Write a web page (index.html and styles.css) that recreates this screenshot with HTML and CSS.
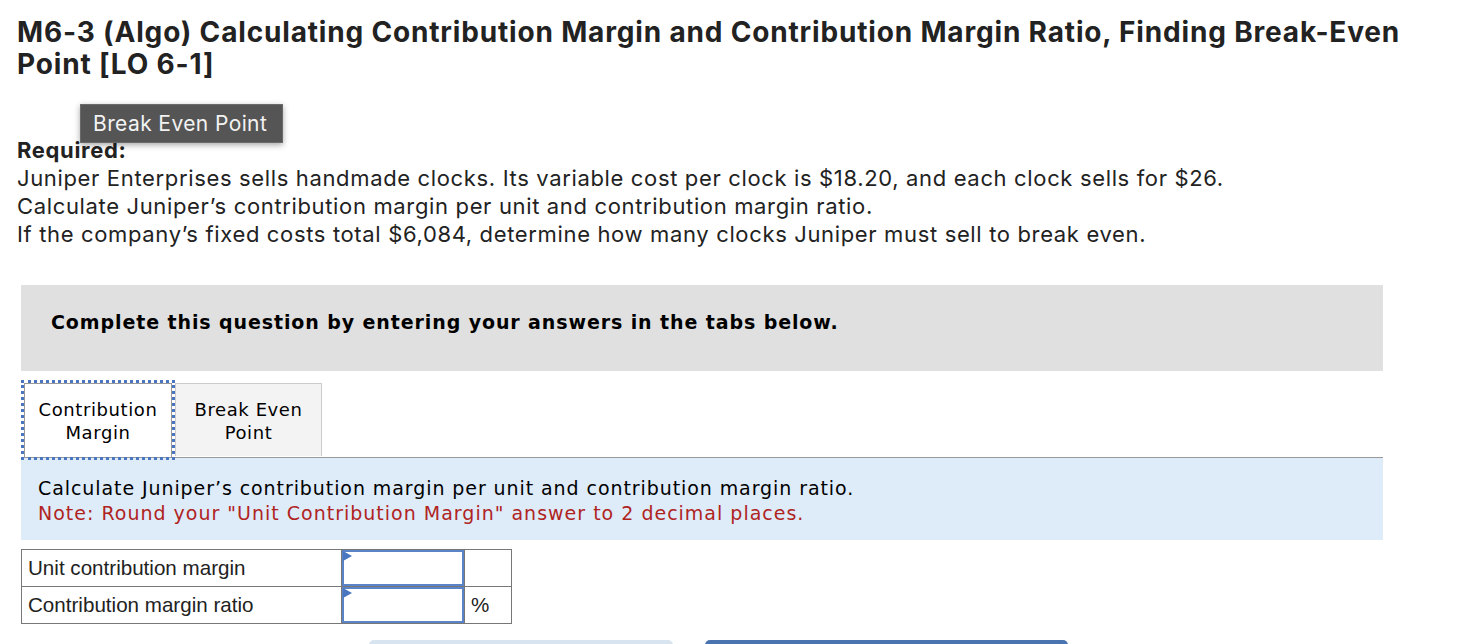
FILE: index.html
```html
<!DOCTYPE html>
<html>
<head>
<meta charset="utf-8">
<link rel="stylesheet" href="styles.css">
</head>
<body>
<div class="page">
  <h1 class="title">M6-3 (Algo) Calculating Contribution Margin and Contribution Margin Ratio, Finding Break-Even<br>Point [LO 6-1]</h1>
  <div class="req">
    <div class="tooltip">Break Even Point</div>
    <p class="req-label">Required:</p>
    <p class="req-text">Juniper Enterprises sells handmade clocks. Its variable cost per clock is $18.20, and each clock sells for $26.<br>Calculate Juniper’s contribution margin per unit and contribution margin ratio.<br>If the company’s fixed costs total $6,084, determine how many clocks Juniper must sell to break even.</p>
  </div>
  <div class="work">
    <div class="instr">Complete this question by entering your answers in the tabs below.</div>
    <div class="tabs">
      <div class="tab active">Contribution<br>Margin</div>
      <div class="tab second">Break Even<br>Point</div>
    </div>
    <div class="panel">
      <p>Calculate Juniper’s contribution margin per unit and contribution margin ratio.</p>
      <p class="note">Note: Round your "Unit Contribution Margin" answer to 2 decimal places.</p>
    </div>
    <table class="grid">
      <tr>
        <td class="lbl">Unit contribution margin</td>
        <td class="inp"><div class="field"></div></td>
        <td class="unit"></td>
      </tr>
      <tr>
        <td class="lbl">Contribution margin ratio</td>
        <td class="inp"><div class="field"></div></td>
        <td class="unit">%</td>
      </tr>
    </table>
    <div class="buttons">
      <div class="btn light"></div>
      <div class="btn dark"></div>
    </div>
  </div>
</div>
</body>
</html>
```
FILE: styles.css
```css
html, body {
  margin: 0;
  padding: 0;
  background: #fff;
  overflow: hidden;
}
.page {
  padding: 16px 0 0 17px;
  color: #222;
}
.title {
  font-family: Inter, "Liberation Sans", sans-serif;
  font-weight: 700;
  font-size: 28px;
  letter-spacing: 0.83px;
  line-height: 32px;
  margin: 0;
  color: #222;
}
.req {
  position: relative;
  margin-top: 56px;
  font-family: Inter, "Liberation Sans", sans-serif;
  font-size: 22px;
  letter-spacing: 0.65px;
  line-height: 28px;
  color: #222;
}
.req p { margin: 0; }
.req-label { font-weight: 700; }
.tooltip {
  position: absolute;
  left: 63px;
  top: -32px;
  width: 203px;
  height: 39px;
  box-sizing: border-box;
  background: #555;
  border: 1px solid #6a6a6a;
  color: #f2f2f2;
  font-size: 21px;
  letter-spacing: 0.4px;
  line-height: 37px;
  padding-left: 12px;
  box-shadow: 0 2px 6px rgba(0,0,0,0.35);
}
.work {
  margin-left: 4px;
  width: 1362px;
  margin-top: 37px;
}
.instr {
  background: #e0e0e0;
  height: 86px;
  box-sizing: border-box;
  padding: 26px 0 0 30px;
  font-family: Verdana, "DejaVu Sans", sans-serif;
  font-weight: 700;
  font-size: 19px;
  letter-spacing: 0.9px;
  color: #000;
}
.tabs {
  display: flex;
  margin-top: 12px;
  border-bottom: 1px solid #999;
  padding-left: 3px;
}
.tab {
  width: 148px;
  height: 73px;
  box-sizing: border-box;
  border: 1px solid #ccc;
  border-bottom: none;
  background: #f3f3f3;
  font-family: Verdana, "DejaVu Sans", sans-serif;
  font-size: 18px;
  letter-spacing: 0.6px;
  line-height: 23px;
  text-align: center;
  padding-top: 14px;
  color: #000;
  margin-right: 3px;
}
.tab.second { width: 147px; }
.tab.active {
  background: #fff;
  border-color: #999;
  outline: 3px dotted #4a76c0;
  outline-offset: 0;
  height: 74px;
}
.panel {
  background: #deebf8;
  height: 82px;
  box-sizing: border-box;
  padding: 18px 0 0 17px;
  font-family: Verdana, "DejaVu Sans", sans-serif;
  font-size: 19px;
  letter-spacing: 0.92px;
  line-height: 25px;
  color: #000;
}
.panel p { margin: 0; }
.panel .note { color: #b0241f; letter-spacing: 1px; }
.grid {
  margin-top: 9px;
  border-collapse: collapse;
  font-family: Arial, "Liberation Sans", sans-serif;
  font-size: 20.6px;
  color: #222;
}
.grid td {
  border: 1px solid #777;
  height: 36px;
  padding: 0;
}
.grid .lbl {
  width: 313px;
  padding-left: 6px;
}
.grid .inp {
  width: 122px;
  padding: 0;
  position: relative;
}
.field {
  height: 32px;
  border: 2px solid #5b83c7;
  position: relative;
}
.field::before {
  content: "";
  position: absolute;
  left: -1px;
  top: -1px;
  border-left: 9px solid #4a76c0;
  border-top: 5px solid transparent;
  border-bottom: 5px solid transparent;
}
.grid .unit {
  width: 40px;
  padding-left: 6px;
}
.buttons {
  display: flex;
  margin-top: 16px;
  padding-left: 348px;
  gap: 32px;
}
.btn {
  height: 30px;
  border-radius: 5px 5px 0 0;
}
.btn.light { width: 304px; background: #d9e4f1; }
.btn.dark { width: 363px; background: #4a74b0; }
```
